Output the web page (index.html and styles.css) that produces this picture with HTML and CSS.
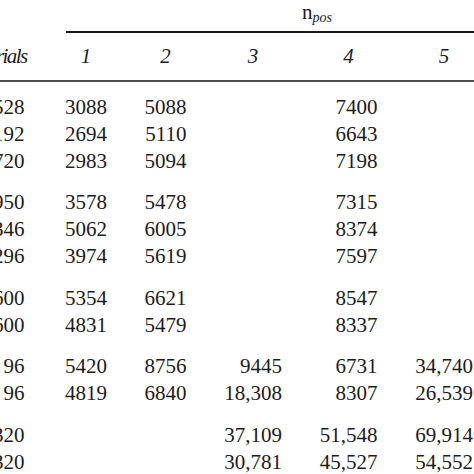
FILE: index.html
```
<!DOCTYPE html>
<html>
<head>
<meta charset="utf-8">
<link rel="stylesheet" href="styles.css">
</head>
<body>
<div class="tbl">
  <div class="blank"></div>
  <div class="group-head"><span class="npos">n<sub class="sub">pos</sub></span></div>

  <div class="hd hd-first">Trials</div>
  <div class="hd">1</div>
  <div class="hd">2</div>
  <div class="hd">3</div>
  <div class="hd">4</div>
  <div class="hd">5</div>

  <div class="rule"></div>
  <div class="gap gap-first"></div>

  <div class="c c0">1528</div><div class="c">3088</div><div class="c">5088</div><div class="c"></div><div class="c">7400</div><div class="c"></div>
  <div class="c c0">1192</div><div class="c">2694</div><div class="c">5110</div><div class="c"></div><div class="c">6643</div><div class="c"></div>
  <div class="c c0">1720</div><div class="c">2983</div><div class="c">5094</div><div class="c"></div><div class="c">7198</div><div class="c"></div>

  <div class="gap"></div>
  <div class="c c0">1950</div><div class="c">3578</div><div class="c">5478</div><div class="c"></div><div class="c">7315</div><div class="c"></div>
  <div class="c c0">1346</div><div class="c">5062</div><div class="c">6005</div><div class="c"></div><div class="c">8374</div><div class="c"></div>
  <div class="c c0">1296</div><div class="c">3974</div><div class="c">5619</div><div class="c"></div><div class="c">7597</div><div class="c"></div>

  <div class="gap"></div>
  <div class="c c0">1600</div><div class="c">5354</div><div class="c">6621</div><div class="c"></div><div class="c">8547</div><div class="c"></div>
  <div class="c c0">1600</div><div class="c">4831</div><div class="c">5479</div><div class="c"></div><div class="c">8337</div><div class="c"></div>

  <div class="gap"></div>
  <div class="c c0">96</div><div class="c">5420</div><div class="c">8756</div><div class="c">9445</div><div class="c">6731</div><div class="c">34,740</div>
  <div class="c c0">96</div><div class="c">4819</div><div class="c">6840</div><div class="c">18,308</div><div class="c">8307</div><div class="c">26,539</div>

  <div class="gap"></div>
  <div class="c c0">1320</div><div class="c"></div><div class="c"></div><div class="c">37,109</div><div class="c">51,548</div><div class="c">69,914</div>
  <div class="c c0">1320</div><div class="c"></div><div class="c"></div><div class="c">30,781</div><div class="c">45,527</div><div class="c">54,552</div>
</div>
</body>
</html>
```
FILE: styles.css
```
html, body {
  margin: 0;
  padding: 0;
  background: #ffffff;
  overflow: hidden;
}

.tbl {
  display: grid;
  grid-template-columns: 80px 42px 42px 58px 58px 58px;
  column-gap: 37.5px;
  margin-left: -52.5px;
  font-family: "Liberation Serif", "Times New Roman", serif;
  font-size: 21px;
  color: #1c1c1c;
}

.blank {
  height: 24px;
}

.group-head {
  grid-column: 2 / -1;
  margin-left: 1px;
  margin-right: -2px;
  padding-left: 236px;
  padding-bottom: 7px;
  line-height: 24px;
  height: 24px;
  border-bottom: 2px solid #1a1a1a;
}

.sub {
  font-size: 14px;
  font-style: italic;
  vertical-align: -3px;
  line-height: 0;
}

.hd {
  font-style: italic;
  text-align: center;
  line-height: 27px;
  padding-top: 10px;
  padding-bottom: 10px;
}

.hd-first {
  text-align: right;
  letter-spacing: -1.6px;
  padding-right: 1px;
}

.rule {
  grid-column: 1 / -1;
  margin-right: -2px;
  border-top: 2px solid #4d4d4d;
}

.gap {
  grid-column: 1 / -1;
  height: 14.5px;
}

.gap-first {
  height: 11.5px;
}

.c {
  text-align: right;
  line-height: 27px;
  height: 27px;
  white-space: nowrap;
}

.c0 {
  padding-right: 3px;
}
```
